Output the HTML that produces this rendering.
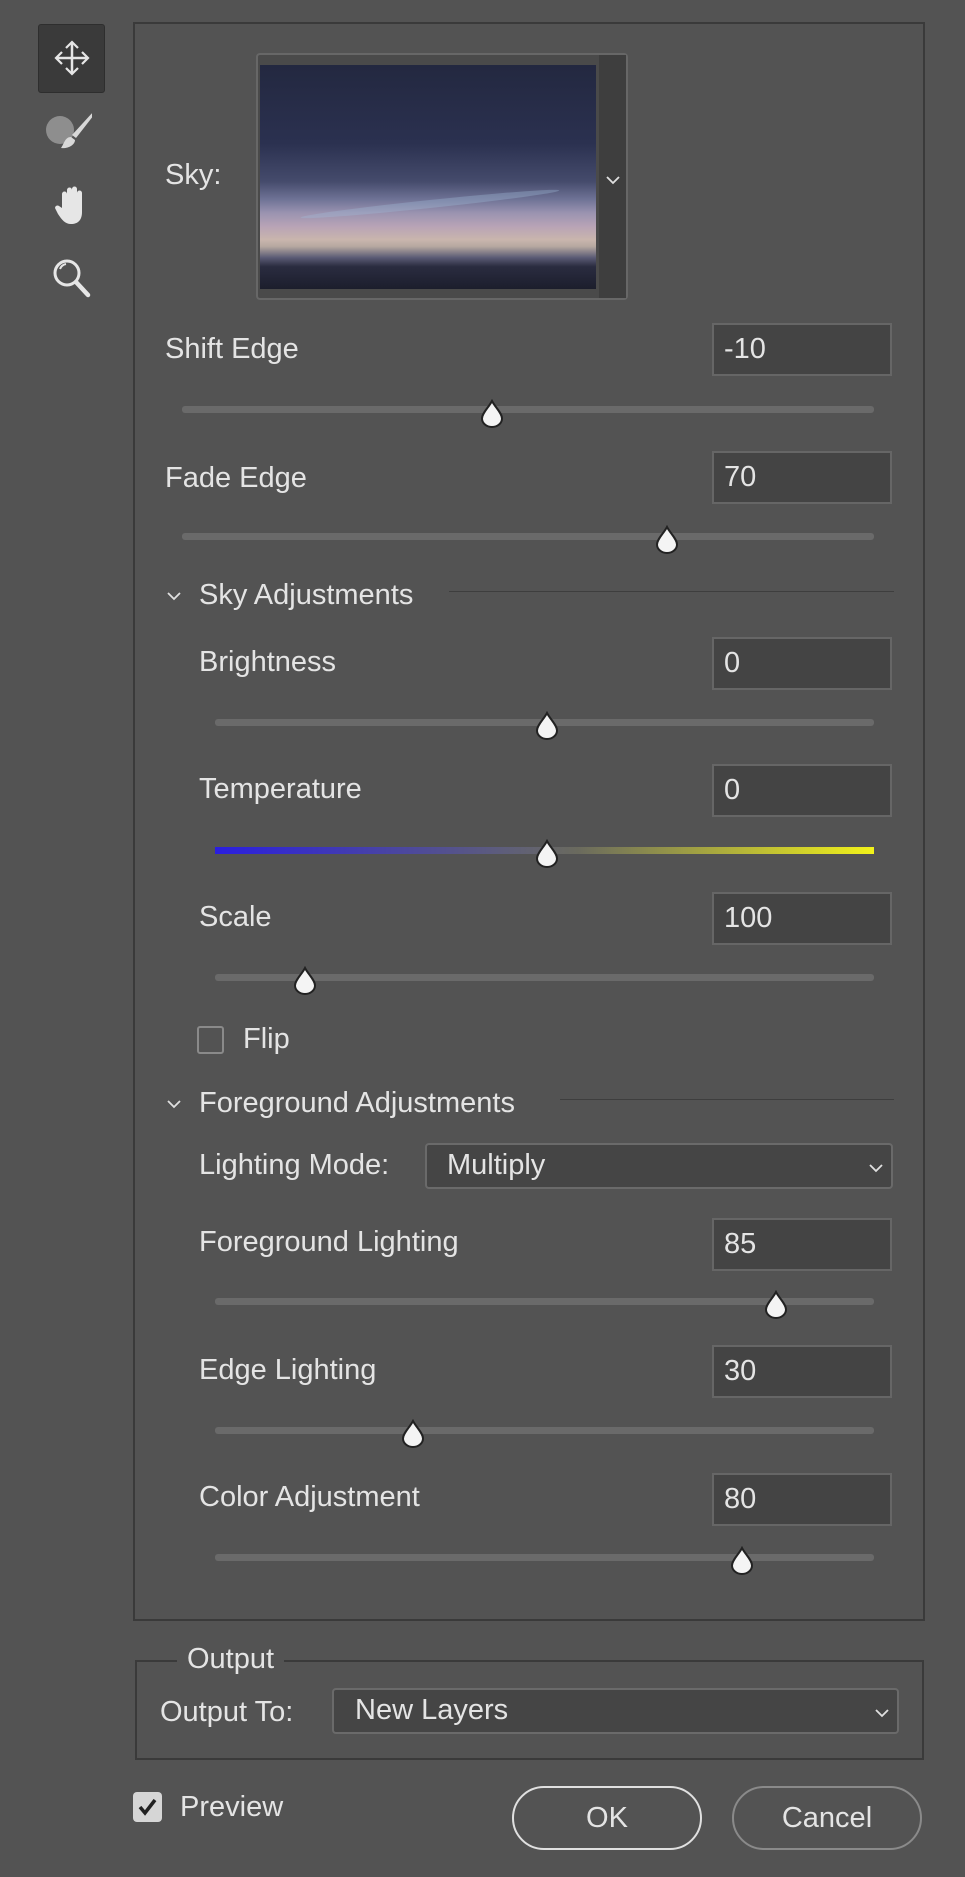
<!DOCTYPE html>
<html><head><meta charset="utf-8"><style>
*{margin:0;padding:0;box-sizing:border-box}
body{width:965px;height:1877px;background:#535353;position:relative;overflow:hidden;font-family:"Liberation Sans",sans-serif;color:#e4e4e4;font-size:29px}
.a{position:absolute}
.t{position:absolute;line-height:34px;white-space:nowrap}
.in{position:absolute;left:712px;width:180px;height:53px;background:#444;border:2px solid #666;line-height:49px;padding-left:10px}
.tr{position:absolute;height:7px;background:#6a6a6a;border-radius:3px}
.th{position:absolute;width:26px;height:30px}
.line{position:absolute;height:1px;background:#3e3e3e}
</style></head><body>
<svg width="0" height="0" style="position:absolute"><defs><path id="tp" d="M13 2C16 8 23 14 23 19.5A10 8.5 0 0 1 3 19.5C3 14 10 8 13 2Z" fill="#f4f4f4" stroke="#222" stroke-width="2"/><path id="cv" d="M2 3L8 9L14 3" fill="none" stroke="#e0e0e0" stroke-width="1.8"/></defs></svg>
<!-- tools -->
<div class="a" style="left:38px;top:24px;width:67px;height:69px;background:#3a3a3a;border:1px solid #2e2e2e;border-radius:3px"></div>
<svg class="a" style="left:52px;top:38px" width="40" height="40" viewBox="0 0 40 40" fill="none" stroke="#e6e6e6" stroke-width="2.5"><path d="M20 4V36M4 20H36"/><path d="M14 10L20 4L26 10M14 30L20 36L26 30M10 14L4 20L10 26M30 14L36 20L30 26" stroke-width="2.2"/></svg>
<svg class="a" style="left:42px;top:108px" width="50" height="44" viewBox="0 0 50 44"><circle cx="18" cy="22" r="14" fill="#8e8e8e"/><path d="M52 3L30 27L34 30L52 7Z" fill="#d8d8d8"/><path d="M29 29C23 29 22 36 19 40C26 41 33 37 33 32Z" fill="#d8d8d8"/></svg>
<svg class="a" style="left:54px;top:184px" width="36" height="42" viewBox="0 0 36 42" fill="#e6e6e6"><path d="M8 24V10a2.5 2.5 0 0 1 5 0V20V6a2.5 2.5 0 0 1 5 0V20V5a2.5 2.5 0 0 1 5 0V20V9a2.5 2.5 0 0 1 5 0V28C28 36 24 40 17 40C11 40 8 36 4 30L1 24a2.5 2.5 0 0 1 4-2Z"/></svg>
<svg class="a" style="left:50px;top:256px" width="44" height="44" viewBox="0 0 44 44" fill="none" stroke="#e6e6e6" stroke-width="3"><circle cx="17" cy="17" r="12"/><path d="M26 26L38 39" stroke-width="4.5" stroke-linecap="round"/><path d="M10 13a8 8 0 0 1 6-5" stroke-width="2"/></svg>
<!-- panel -->
<div class="a" style="left:133px;top:22px;width:792px;height:1599px;border:2px solid #3a3a3a"></div>
<div class="t" style="left:165px;top:158px">Sky:</div>
<div class="a" style="left:256px;top:53px;width:372px;height:247px;border:2px solid #676767;border-radius:4px;background:#4a4a4a"></div>
<div class="a" style="left:260px;top:65px;width:336px;height:224px;background:linear-gradient(180deg,#232840 0%,#2b3150 35%,#454b6c 52%,#6f7396 60%,#9a93b0 66%,#b8a3b6 72%,#c9b5ad 78%,#b6a8a0 81%,#5b5b75 86%,#2a2c40 90%,#1c1e2c 100%)"></div>
<div class="a" style="left:300px;top:200px;width:260px;height:8px;background:rgba(160,185,215,.35);border-radius:50%;transform:rotate(-6deg)"></div>
<div class="a" style="left:599px;top:55px;width:27px;height:243px;background:#3e3e3e"></div>
<svg class="a" style="left:605px;top:174px" width="16" height="12"><use href="#cv"/></svg>

<div class="t" style="left:165px;top:332px">Shift Edge</div>
<div class="in" style="top:323px">-10</div>
<div class="tr" style="left:182px;width:692px;top:406px"></div>
<svg class="th" style="left:479px;top:399px" viewBox="0 0 26 30"><use href="#tp"/></svg>

<div class="t" style="left:165px;top:461px">Fade Edge</div>
<div class="in" style="top:451px">70</div>
<div class="tr" style="left:182px;width:692px;top:533px"></div>
<svg class="th" style="left:654px;top:525px" viewBox="0 0 26 30"><use href="#tp"/></svg>

<svg class="a" style="left:166px;top:590px" width="16" height="12"><use href="#cv"/></svg>
<div class="t" style="left:199px;top:578px">Sky Adjustments</div>
<div class="line" style="left:449px;width:445px;top:591px"></div>

<div class="t" style="left:199px;top:645px">Brightness</div>
<div class="in" style="top:637px">0</div>
<div class="tr" style="left:215px;width:659px;top:719px"></div>
<svg class="th" style="left:534px;top:711px" viewBox="0 0 26 30"><use href="#tp"/></svg>

<div class="t" style="left:199px;top:772px">Temperature</div>
<div class="in" style="top:764px">0</div>
<div class="tr" style="left:215px;width:659px;top:847px;border-radius:0;background:linear-gradient(90deg,#2a1ee0,#5f5f78 45%,#6a6a5e 55%,#f2f21a)"></div>
<svg class="th" style="left:534px;top:839px" viewBox="0 0 26 30"><use href="#tp"/></svg>

<div class="t" style="left:199px;top:900px">Scale</div>
<div class="in" style="top:892px">100</div>
<div class="tr" style="left:215px;width:659px;top:974px"></div>
<svg class="th" style="left:292px;top:966px" viewBox="0 0 26 30"><use href="#tp"/></svg>

<div class="a" style="left:197px;top:1026px;width:27px;height:28px;border:2px solid #8a8a8a;border-radius:3px"></div>
<div class="t" style="left:243px;top:1022px">Flip</div>

<svg class="a" style="left:166px;top:1098px" width="16" height="12"><use href="#cv"/></svg>
<div class="t" style="left:199px;top:1086px">Foreground Adjustments</div>
<div class="line" style="left:560px;width:334px;top:1099px"></div>

<div class="t" style="left:199px;top:1148px">Lighting Mode:</div>
<div class="a" style="left:425px;top:1143px;width:468px;height:46px;background:#454545;border:2px solid #6a6a6a;border-radius:4px"></div>
<div class="t" style="left:447px;top:1148px">Multiply</div>
<svg class="a" style="left:868px;top:1162px" width="16" height="12"><use href="#cv"/></svg>

<div class="t" style="left:199px;top:1225px">Foreground Lighting</div>
<div class="in" style="top:1218px">85</div>
<div class="tr" style="left:215px;width:659px;top:1298px"></div>
<svg class="th" style="left:763px;top:1290px" viewBox="0 0 26 30"><use href="#tp"/></svg>

<div class="t" style="left:199px;top:1353px">Edge Lighting</div>
<div class="in" style="top:1345px">30</div>
<div class="tr" style="left:215px;width:659px;top:1427px"></div>
<svg class="th" style="left:400px;top:1419px" viewBox="0 0 26 30"><use href="#tp"/></svg>

<div class="t" style="left:199px;top:1480px">Color Adjustment</div>
<div class="in" style="top:1473px">80</div>
<div class="tr" style="left:215px;width:659px;top:1554px"></div>
<svg class="th" style="left:729px;top:1546px" viewBox="0 0 26 30"><use href="#tp"/></svg>

<!-- output -->
<div class="a" style="left:135px;top:1660px;width:789px;height:100px;border:2px solid #3a3a3a"></div>
<div class="t" style="left:177px;top:1642px;background:#535353;padding:0 10px">Output</div>
<div class="t" style="left:160px;top:1695px">Output To:</div>
<div class="a" style="left:332px;top:1688px;width:567px;height:46px;background:#454545;border:2px solid #6a6a6a;border-radius:4px"></div>
<div class="t" style="left:355px;top:1693px">New Layers</div>
<svg class="a" style="left:874px;top:1707px" width="16" height="12"><use href="#cv"/></svg>

<div class="a" style="left:133px;top:1792px;width:29px;height:30px;background:#d6d6d6;border-radius:4px"></div>
<svg class="a" style="left:137px;top:1797px" width="21" height="20" viewBox="0 0 21 20"><path d="M3 10L8 16L18 3" fill="none" stroke="#222" stroke-width="3.5"/></svg>
<div class="t" style="left:180px;top:1790px">Preview</div>
<div class="a" style="left:512px;top:1786px;width:190px;height:64px;border:2px solid #e0e0e0;border-radius:32px;text-align:center;line-height:60px">OK</div>
<div class="a" style="left:732px;top:1786px;width:190px;height:64px;border:2px solid #8a8a8a;border-radius:32px;text-align:center;line-height:60px">Cancel</div>
</body></html>
